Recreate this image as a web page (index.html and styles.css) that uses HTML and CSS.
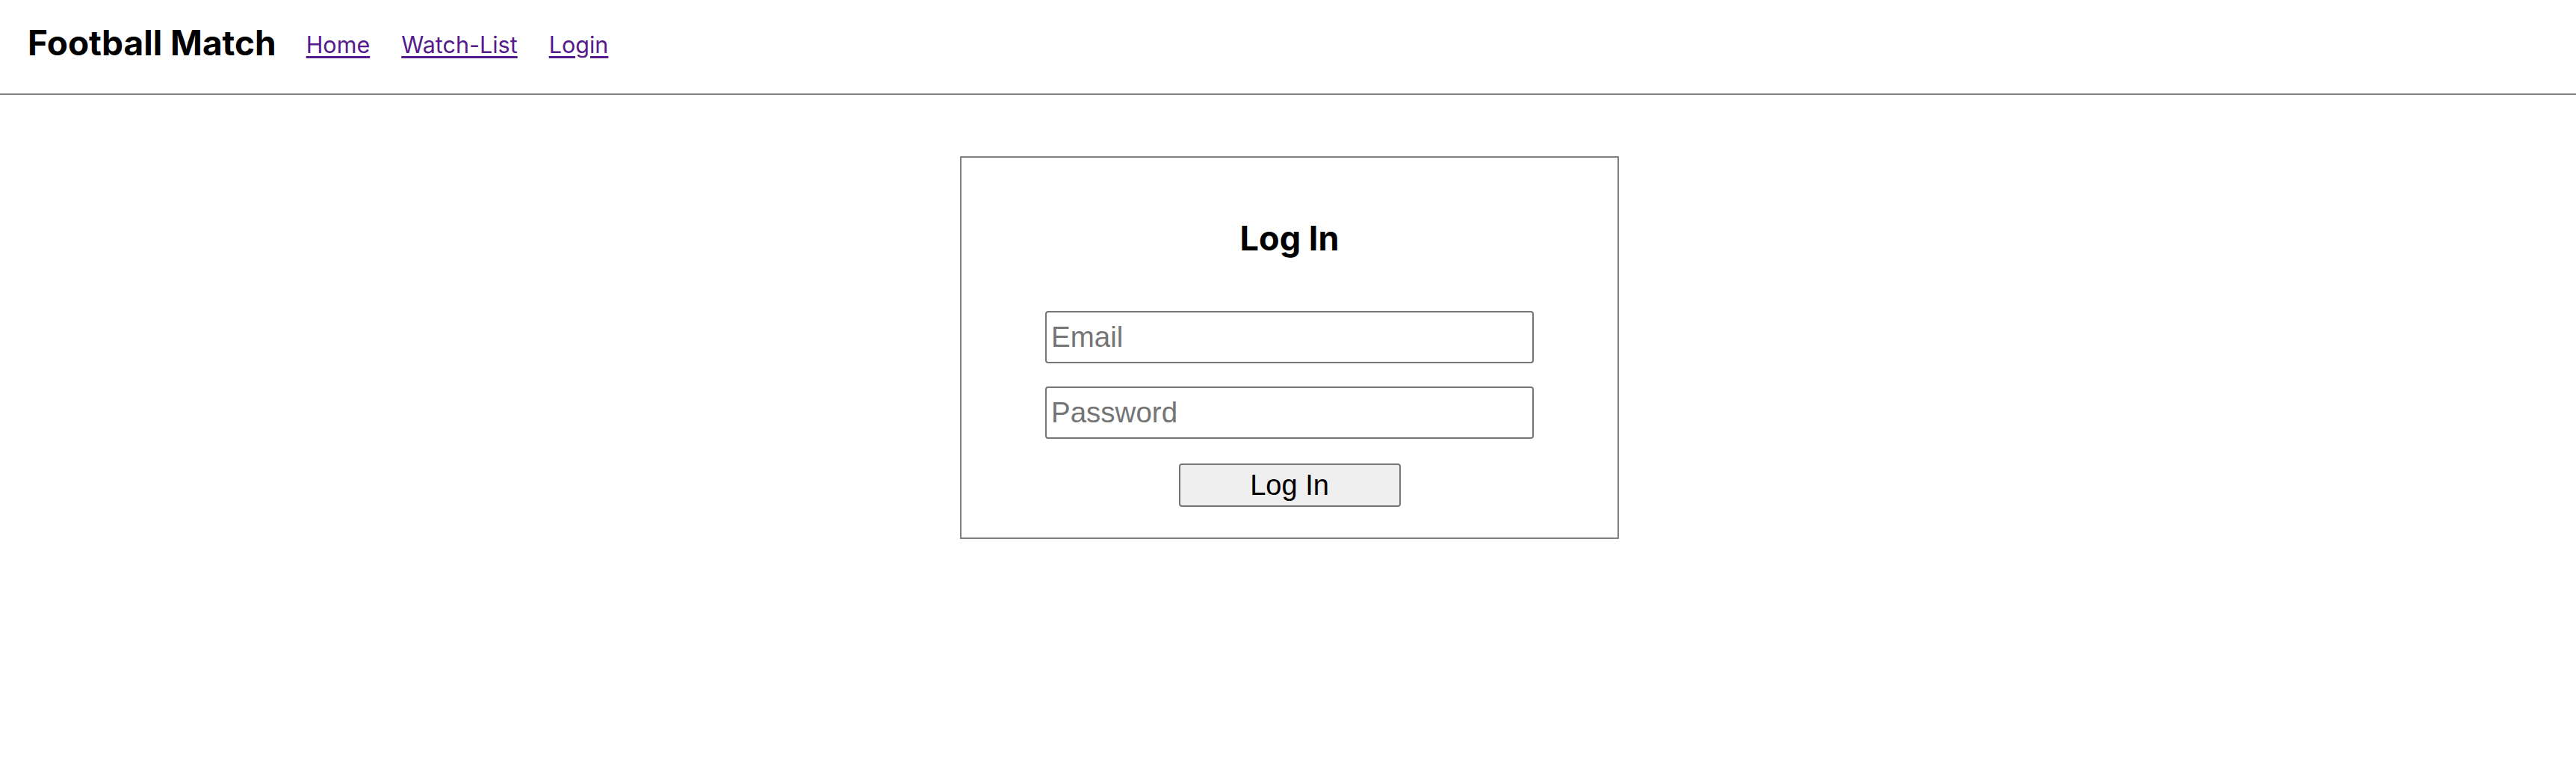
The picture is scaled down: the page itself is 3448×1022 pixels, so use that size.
FILE: index.html
```html
<!DOCTYPE html>
<html lang="en">
<head>
<meta charset="utf-8">
<title>Football Match</title>
<link rel="stylesheet" href="styles.css">
</head>
<body>
<header class="site-header">
  <h1 class="brand">Football Match</h1>
  <nav class="nav">
    <a href="#" class="nav-link">Home</a>
    <a href="#" class="nav-link">Watch-List</a>
    <a href="#" class="nav-link">Login</a>
  </nav>
</header>
<main class="main">
  <form class="login-card">
    <h2 class="login-title">Log In</h2>
    <input class="field" type="email" placeholder="Email">
    <input class="field" type="password" placeholder="Password">
    <button class="submit" type="button">Log In</button>
  </form>
</main>
</body>
</html>
```

FILE: styles.css
```css
html, body {
  margin: 0;
  padding: 0;
  background: #ffffff;
}
body {
  font-family: Inter, "Liberation Sans", sans-serif;
  color: #000;
}
.site-header {
  display: flex;
  align-items: center;
  height: 115px;
  padding: 0 0 10px 37px;
  border-bottom: 2px solid #808080;
  box-sizing: content-box;
}
.brand {
  margin: 0;
  font-size: 46px;
  font-weight: 700;
  line-height: 1.2;
}
.nav {
  display: flex;
  gap: 42px;
  margin-left: 40px;
  padding-top: 4px;
}
.nav-link {
  font-size: 30.5px;
  color: #551a8b;
  text-decoration: underline;
  text-underline-offset: 4px;
}
.main {
  display: flex;
  justify-content: center;
  padding: 82px 0 0 4px;
}
.login-card {
  width: 882px;
  box-sizing: border-box;
  border: 2px solid #808080;
  display: flex;
  flex-direction: column;
  align-items: center;
  padding: 81px 0 41px;
}
.login-title {
  margin: 0 0 70px;
  font-size: 45px;
  line-height: 54px;
  font-weight: 700;
}
.field {
  width: 654px;
  height: 70px;
  box-sizing: border-box;
  border: 2px solid #767676;
  border-radius: 4px;
  padding: 0 6px;
  font-family: "Liberation Sans", Arial, sans-serif;
  font-size: 38.5px;
  color: #000;
  background: #fff;
  margin: 0 0 31px;
}
.field + .field {
  margin-bottom: 33px;
}
.field::placeholder {
  color: #757575;
}
.submit {
  width: 297px;
  height: 58px;
  box-sizing: border-box;
  background: #efefef;
  border: 2px solid #767676;
  border-radius: 4px;
  font-family: "Liberation Sans", Arial, sans-serif;
  font-size: 38px;
  color: #000;
  padding: 0;
}
```
